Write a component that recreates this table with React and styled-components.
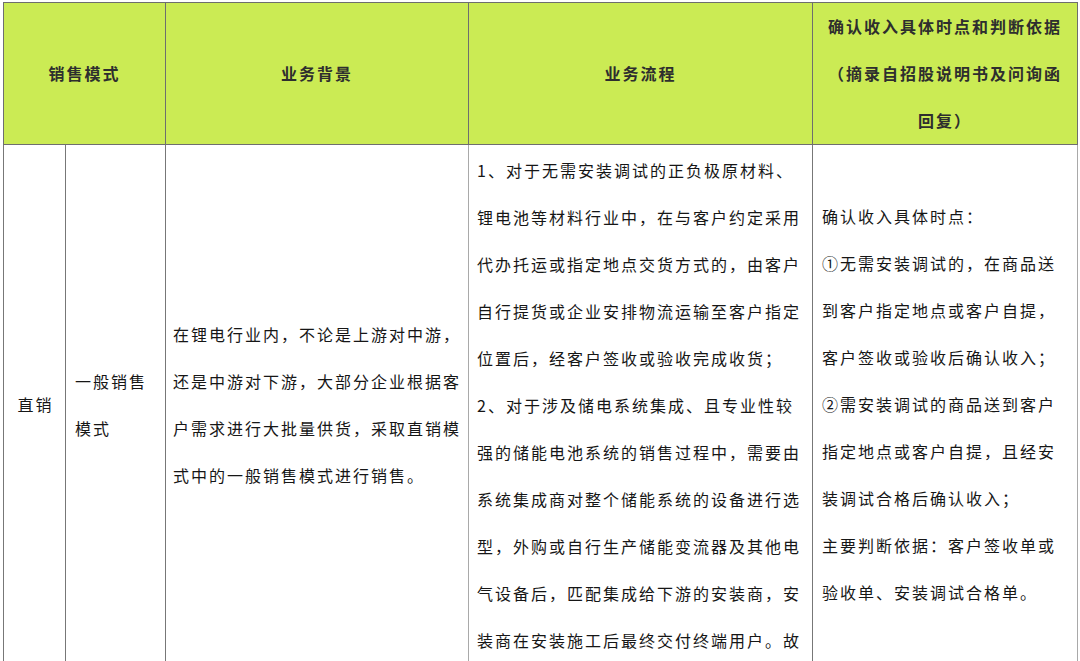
import React from 'react';
import styled, { createGlobalStyle } from 'styled-components';

const Global = createGlobalStyle`
  html, body { margin: 0; padding: 0; overflow: hidden; background: #ffffff; }
  body { font-family: "Noto Sans CJK SC", "Noto Sans", sans-serif; }
`;

const Page = styled.div`
  padding: 2px 0 0 3px;
`;

const Table = styled.table`
  border-collapse: collapse;
  table-layout: fixed;
  width: 1074px;
  font-size: 16px;
  letter-spacing: 2px;
  line-height: 47px;
  color: #161616;
`;

const HeadCell = styled.th`
  background: #cbeb54;
  border: 1px solid #6e6e6e;
  padding: 0 10px;
  font-weight: 700;
  color: #2e2e2e;
  text-align: center;
  vertical-align: middle;
`;

const Cell = styled.td`
  border: 1px solid ${(p) => (p.$light ? '#a9a9a9' : '#777777')};
  border-top-color: #6e6e6e;
  padding: ${(p) => p.$pad || '0 8px'};
  text-align: ${(p) => p.$align || 'left'};
  vertical-align: ${(p) => p.$valign || 'middle'};
  word-break: break-all;
`;

const Para = styled.p`
  margin: 0;
`;

const widths = [62, 100, 303, 344, 265];

export default function App() {
  return (
    <>
      <Global />
      <Page>
        <Table>
          <colgroup>
            {widths.map((w, i) => (
              <col key={i} style={{ width: w }} />
            ))}
          </colgroup>
          <thead>
            <tr>
              <HeadCell colSpan={2}>销售模式</HeadCell>
              <HeadCell>业务背景</HeadCell>
              <HeadCell>业务流程</HeadCell>
              <HeadCell>确认收入具体时点和判断依据（摘录自招股说明书及问询函回复）</HeadCell>
            </tr>
          </thead>
          <tbody>
            <tr>
              <Cell $align="center" $pad="0 2px 0 4px">直销</Cell>
              <Cell $pad="0 8px 0 9px">一般销售模式</Cell>
              <Cell $light $pad="0 0 0 7px">
                在锂电行业内，不论是上游对中游，还是中游对下游，大部分企业根据客户需求进行大批量供货，采取直销模式中的一般销售模式进行销售。
              </Cell>
              <Cell $valign="top" $pad="2px 4px 0 8px">
                <Para>
                  1、对于无需安装调试的正负极原材料、锂电池等材料行业中，在与客户约定采用代办托运或指定地点交货方式的，由客户自行提货或企业安排物流运输至客户指定位置后，经客户签收或验收完成收货；
                </Para>
                <Para>
                  2、对于涉及储电系统集成、且专业性较强的储能电池系统的销售过程中，需要由系统集成商对整个储能系统的设备进行选型，外购或自行生产储能变流器及其他电气设备后，匹配集成给下游的安装商，安装商在安装施工后最终交付终端用户。故
                </Para>
              </Cell>
              <Cell $light $pad="0 10px 0 9px">
                <Para>确认收入具体时点：</Para>
                <Para>①无需安装调试的，在商品送到客户指定地点或客户自提，客户签收或验收后确认收入；</Para>
                <Para>②需安装调试的商品送到客户指定地点或客户自提，且经安装调试合格后确认收入；</Para>
                <Para>主要判断依据：客户签收单或验收单、安装调试合格单。</Para>
              </Cell>
            </tr>
          </tbody>
        </Table>
      </Page>
    </>
  );
}
